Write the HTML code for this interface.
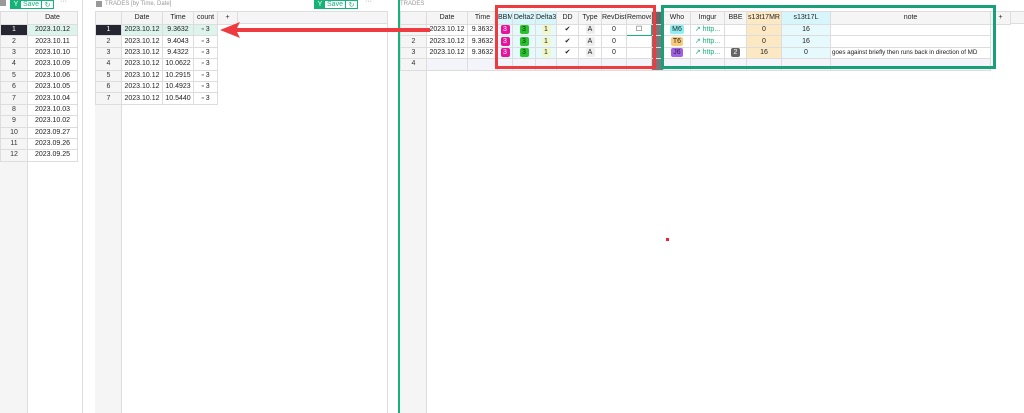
<!DOCTYPE html>
<html><head><meta charset="utf-8"><style>
*{margin:0;padding:0;box-sizing:border-box}
body{width:1024px;height:413px;background:#fff;position:relative;overflow:hidden;font-family:"Liberation Sans",sans-serif;font-size:7px;color:#222}
.a{position:absolute}
table{border-collapse:collapse;table-layout:fixed;position:absolute}
td{border:1px solid #ddd;height:11.4px;text-align:center;white-space:nowrap;overflow:hidden;padding:0;line-height:10px;font-size:7px}
tr.h td{background:#f5f5f5;height:13px}
td.n{background:#f5f5f5;color:#333}
td.sel{background:#262633;color:#fff}
.vl{position:absolute;width:1px;background:#ddd}
.save{position:absolute;height:9px;top:0;border:1px solid #16b378;display:flex;font-size:7px}
.save span{display:block}
.bd{display:inline-block;padding:0 2px;border-radius:2px;line-height:9px;font-size:7px;min-width:9px}
</style></head><body>
<!-- left panel -->
<div class="a" style="left:0;top:11px;width:27px;height:402px;background:#f5f5f5"></div>
<div class="vl" style="left:27px;top:11px;height:402px"></div>
<div class="vl" style="left:82px;top:0;height:413px"></div>
<div class="a" style="left:0;top:0;width:6px;height:6px;background:#999"></div>
<div class="save" style="left:10px;width:44px"><span style="width:10px;background:#16b378;color:#fff;text-align:center">Y</span><span style="width:20px;color:#16b378;text-align:center">Save</span><span style="width:12px;border-left:1px solid #16b378;color:#16b378;text-align:center">↻</span></div>
<div class="a" style="left:60px;top:-2px;color:#888">···</div>
<table style="left:0;top:11px;width:78px">
<col style="width:27px"><col style="width:50px">
<tr class="h"><td></td><td>Date</td></tr>
<tr><td class="sel">1</td><td style="background:#dcf4eb">2023.10.12</td></tr>
<tr><td class="n">2</td><td>2023.10.11</td></tr>
<tr><td class="n">3</td><td>2023.10.10</td></tr>
<tr><td class="n">4</td><td>2023.10.09</td></tr>
<tr><td class="n">5</td><td>2023.10.06</td></tr>
<tr><td class="n">6</td><td>2023.10.05</td></tr>
<tr><td class="n">7</td><td>2023.10.04</td></tr>
<tr><td class="n">8</td><td>2023.10.03</td></tr>
<tr><td class="n">9</td><td>2023.10.02</td></tr>
<tr><td class="n">10</td><td>2023.09.27</td></tr>
<tr><td class="n">11</td><td>2023.09.26</td></tr>
<tr><td class="n">12</td><td>2023.09.25</td></tr>
</table>
<!-- middle panel -->
<div class="vl" style="left:95px;top:11px;height:402px"></div>
<div class="a" style="left:95px;top:11px;width:26px;height:402px;background:#f5f5f5"></div>
<div class="vl" style="left:121px;top:11px;height:402px"></div>
<div class="vl" style="left:387px;top:11px;height:402px"></div>
<div class="a" style="left:96px;top:1px;width:6px;height:6px;background:#999"></div>
<div class="a" style="left:105px;top:1px;color:#999;font-size:6px">TRADES [by Time, Date]</div>
<div class="save" style="left:314px;width:44px"><span style="width:10px;background:#16b378;color:#fff;text-align:center">Y</span><span style="width:20px;color:#16b378;text-align:center">Save</span><span style="width:12px;border-left:1px solid #16b378;color:#16b378;text-align:center">↻</span></div>
<div class="a" style="left:365px;top:-2px;color:#888">···</div>
<div class="a" style="left:95px;top:11px;width:293px;height:13px;background:#f5f5f5;border:1px solid #ddd"></div>
<table style="left:95px;top:11px;width:143px">
<col style="width:26px"><col style="width:41px"><col style="width:31px"><col style="width:24px"><col style="width:20px">
<tr class="h"><td></td><td>Date</td><td>Time</td><td>count</td><td>+</td></tr>
<tr><td class="sel">1</td><td style="background:#dcf4eb">2023.10.12</td><td style="background:#dcf4eb">9.3632</td><td style="background:#dcf4eb">▫ 3</td><td style="border:0"></td></tr>
<tr><td class="n">2</td><td>2023.10.12</td><td>9.4043</td><td>▫ 3</td><td style="border:0"></td></tr>
<tr><td class="n">3</td><td>2023.10.12</td><td>9.4322</td><td>▫ 3</td><td style="border:0"></td></tr>
<tr><td class="n">4</td><td>2023.10.12</td><td>10.0622</td><td>▫ 3</td><td style="border:0"></td></tr>
<tr><td class="n">5</td><td>2023.10.12</td><td>10.2915</td><td>▫ 3</td><td style="border:0"></td></tr>
<tr><td class="n">6</td><td>2023.10.12</td><td>10.4923</td><td>▫ 3</td><td style="border:0"></td></tr>
<tr><td class="n">7</td><td>2023.10.12</td><td>10.5440</td><td>▫ 3</td><td style="border:0"></td></tr>
</table>
<!-- right panel -->
<div class="a" style="left:398px;top:0;width:2px;height:413px;background:#16b378"></div>
<div class="a" style="left:400px;top:1px;color:#999;font-size:6px">TRADES</div>
<div class="a" style="left:400px;top:11px;width:26px;height:402px;background:#f5f5f5"></div>
<div class="vl" style="left:426px;top:11px;height:402px"></div>
<div class="a" style="left:400px;top:11px;width:624px;height:13px;background:#f5f5f5;border-top:1px solid #ddd;border-bottom:1px solid #ddd"></div>
<table style="left:400px;top:11px;width:610px">
<col style="width:26px"><col style="width:41px"><col style="width:30px"><col style="width:15px"><col style="width:23px"><col style="width:21px"><col style="width:22px"><col style="width:23px"><col style="width:25px"><col style="width:25px"><col style="width:12px"><col style="width:27px"><col style="width:34px"><col style="width:22px"><col style="width:35px"><col style="width:49px"><col style="width:160px"><col style="width:20px">
<tr class="h"><td></td><td>Date</td><td>Time</td><td style="background:#d6f6fb">BBM</td><td style="background:#d6f6fb">Delta2</td><td style="background:#d6f6fb">Delta3</td><td>DD</td><td>Type</td><td>RevDist</td><td>Remove</td><td style="background:#666"></td><td>Who</td><td>Imgur</td><td>BBE</td><td style="background:#fde8c4">s13t17MR</td><td style="background:#d6f6fb">s13t17L</td><td>note</td><td>+</td></tr>
<tr><td class="n"></td><td>2023.10.12</td><td>9.3632</td><td style="background:#e6fafd"><span class="bd" style="background:#e8129c;color:#fff">3</span></td><td style="background:#e6fafd"><span class="bd" style="background:#27c42b">3</span></td><td style="background:#e6fafd"><span class="bd" style="background:#f2f7c8">1</span></td><td>✔</td><td><span class="bd" style="background:#eee">A</span></td><td>0</td><td style="border:1px solid #16b378">☐</td><td style="background:#777"></td><td><span class="bd" style="background:#8ef0f4">M6</span></td><td style="color:#16b378">↗ http...</td><td></td><td style="background:#fde8c4">0</td><td style="background:#e6fafd">16</td><td></td><td style="border:0"></td></tr>
<tr><td class="n">2</td><td>2023.10.12</td><td>9.3632</td><td style="background:#e6fafd"><span class="bd" style="background:#e8129c;color:#fff">3</span></td><td style="background:#e6fafd"><span class="bd" style="background:#27c42b">3</span></td><td style="background:#e6fafd"><span class="bd" style="background:#f2f7c8">1</span></td><td>✔</td><td><span class="bd" style="background:#eee">A</span></td><td>0</td><td></td><td style="background:#777"></td><td><span class="bd" style="background:#fbc97a">T6</span></td><td style="color:#16b378">↗ http...</td><td></td><td style="background:#fde8c4">0</td><td style="background:#e6fafd">16</td><td></td><td style="border:0"></td></tr>
<tr><td class="n">3</td><td>2023.10.12</td><td>9.3632</td><td style="background:#e6fafd"><span class="bd" style="background:#e8129c;color:#fff">3</span></td><td style="background:#e6fafd"><span class="bd" style="background:#27c42b">3</span></td><td style="background:#e6fafd"><span class="bd" style="background:#f2f7c8">1</span></td><td>✔</td><td><span class="bd" style="background:#eee">A</span></td><td>0</td><td></td><td style="background:#777"></td><td><span class="bd" style="background:#a35ee8">J6</span></td><td style="color:#16b378">↗ http...</td><td><span class="bd" style="background:#666;color:#fff">2</span></td><td style="background:#fde8c4">16</td><td style="background:#e6fafd">0</td><td style="text-align:left;padding-left:1px;font-size:6.3px;letter-spacing:-0.05px">goes against briefly then runs back in direction of MD</td><td style="border:0"></td></tr>
<tr><td class="n">4</td><td style="background:#f4f5fb"></td><td style="background:#f4f5fb"></td><td style="background:#f4f5fb"></td><td style="background:#f4f5fb"></td><td style="background:#f4f5fb"></td><td style="background:#f4f5fb"></td><td style="background:#f4f5fb"></td><td style="background:#f4f5fb"></td><td style="background:#f4f5fb"></td><td style="background:#777"></td><td style="background:#f4f5fb"></td><td style="background:#f4f5fb"></td><td style="background:#f4f5fb"></td><td style="background:#f4f5fb"></td><td style="background:#f4f5fb"></td><td style="background:#f4f5fb"></td><td style="border:0"></td></tr>
</table>
<!-- highlight boxes -->
<div class="a" style="left:495px;top:5px;width:161px;height:64px;border:3px solid #ee3b3f"></div>
<div class="a" style="left:661px;top:5px;width:335px;height:64px;border:3px solid #17a07a"></div>
<!-- arrow -->
<div class="a" style="left:236px;top:28px;width:194px;height:4px;background:#ee3b3f"></div>
<svg class="a" style="left:220px;top:22px" width="22" height="16"><polygon points="0,8 20,0 16,8 20,16" fill="#ee3b3f"/></svg>
<div class="a" style="left:666px;top:238px;width:3px;height:3px;background:#ee2233"></div>
</body></html>
